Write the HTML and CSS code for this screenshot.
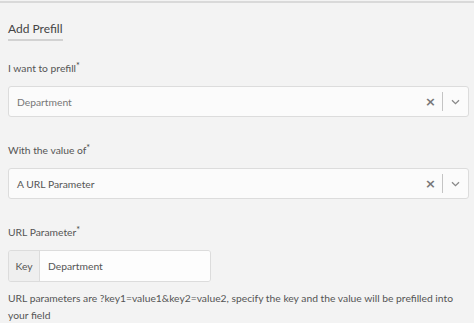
FILE: index.html
```html
<!DOCTYPE html>
<html>
<head>
<meta charset="utf-8">
<link rel="stylesheet" href="styles.css">
</head>
<body>
<div class="panel">
  <div class="tab"><span class="tab-label">Add Prefill</span></div>

  <div class="field first">
    <div class="label">I want to prefill<span class="req">*</span></div>
    <div class="select">
      <div class="value">Department</div>
      <div class="icons">
        <span class="clear">×</span>
        <span class="sep"></span>
        <svg class="chev" width="9" height="6" viewBox="0 0 9 6"><path d="M1 1.2 L4.5 4.6 L8 1.2" fill="none" stroke="#888" stroke-width="1.3"/></svg>
      </div>
    </div>
  </div>

  <div class="field">
    <div class="label">With the value of<span class="req">*</span></div>
    <div class="select">
      <div class="value dark">A URL Parameter</div>
      <div class="icons">
        <span class="clear">×</span>
        <span class="sep"></span>
        <svg class="chev" width="9" height="6" viewBox="0 0 9 6"><path d="M1 1.2 L4.5 4.6 L8 1.2" fill="none" stroke="#888" stroke-width="1.3"/></svg>
      </div>
    </div>
  </div>

  <div class="field">
    <div class="label">URL Parameter<span class="req">*</span></div>
    <div class="group">
      <div class="addon">Key</div>
      <div class="input">Department</div>
    </div>
    <div class="help">URL parameters are ?key1=value1&amp;key2=value2, specify the key and the value will be prefilled into your field</div>
  </div>
</div>
</body>
</html>
```
FILE: styles.css
```css
html, body {
  margin: 0;
  padding: 0;
  background: #f3f3f3;
}
body {
  font-family: Lato, "Open Sans", Arial, sans-serif;
  font-size: 10.3px;
  color: #555;
}
.panel {
  border-top: 2px solid #d9d9d9;
  margin-top: 1px;
  padding: 0 5px 0 8px;
  height: 320px;
  box-sizing: border-box;
}
.tab {
  padding-top: 18px;
  height: 16px;
}
.tab-label {
  display: inline-block;
  font-size: 12px;
  color: #444;
  padding-bottom: 3px;
  border-bottom: 2px solid #d2d2d2;
}
.label {
  margin-top: 23px;
  height: 16px;
  line-height: 16px;
  color: #555;
}
.field.first .label { margin-top: 21px; }
.req {
  font-size: 9px;
  vertical-align: 3px;
  color: #444;
}
.select {
  margin-top: 12px;
  height: 31px;
  box-sizing: border-box;
  border: 1px solid #dcdcdc;
  border-radius: 3px;
  background: #fbfbfb;
  display: flex;
  align-items: center;
  justify-content: space-between;
}
.value {
  padding-left: 8px;
  color: #777;
}
.value.dark { color: #555; }
.icons {
  display: flex;
  align-items: center;
  height: 100%;
}
.clear {
  font-size: 13px;
  font-weight: bold;
  color: #777;
  font-family: "DejaVu Sans", sans-serif;
  line-height: 1;
  margin-right: 6px;
}
.sep {
  width: 1px;
  height: 19px;
  background: #c4c4c4;
}
.chev {
  margin: 0 8px 0 8px;
}
.group {
  margin-top: 12px;
  width: 203px;
  height: 32px;
  box-sizing: border-box;
  border: 1px solid #dcdcdc;
  border-radius: 3px;
  display: flex;
  overflow: hidden;
}
.addon {
  width: 30px;
  background: #efefef;
  border-right: 1px solid #dcdcdc;
  display: flex;
  align-items: center;
  justify-content: center;
  color: #555;
}
.input {
  flex: 1;
  background: #fdfdfd;
  display: flex;
  align-items: center;
  padding-left: 8px;
  color: #555;
}
.help {
  margin-top: 8px;
  line-height: 17px;
  color: #555;
  width: 455px;
}
```
